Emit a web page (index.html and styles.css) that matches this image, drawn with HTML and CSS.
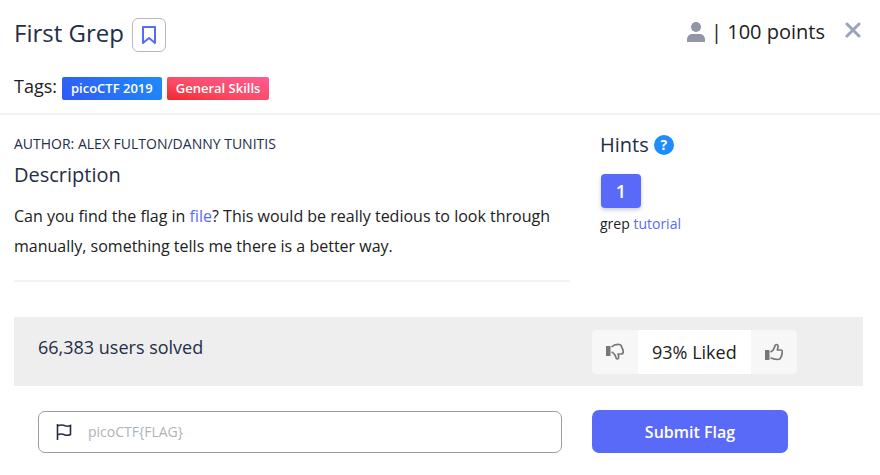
FILE: index.html
```html
<!DOCTYPE html>
<html lang="en">
<head>
    <meta charset="UTF-8">
    <meta name="viewport" content="width=device-width, initial-scale=1.0">
    <title>First Grep</title>
    <link rel="stylesheet" href="styles.css">
</head>
<body>
<header>
    <div class="title-row">
        <h1>First Grep</h1>
        <button type="button" class="bookmark" aria-label="Bookmark">
            <svg width="14" height="18" viewBox="0 0 14 18" fill="none" stroke="#5a6af8" stroke-width="2" stroke-linejoin="round"><path d="M1 1h12v16l-6-5-6 5z"/></svg>
        </button>
        <div class="points">
            <svg width="18" height="20" viewBox="0 0 18 20" fill="#9296a6"><circle cx="9" cy="5" r="5"/><path d="M0 20v-2.500c0-3.500 2.500-5.500 5.500-5.500h7c3 0 5.500 2 5.500 5.500V20z"/></svg>
            <span>| 100 points</span>
        </div>
        <button type="button" class="close" aria-label="Close">
            <svg width="16" height="16" viewBox="0 0 16 16" fill="none" stroke="#9ba3bf" stroke-width="3" stroke-linecap="round"><path d="M2 2l12 12M14 2L2 14"/></svg>
        </button>
    </div>
    <div class="tags">
        <span>Tags:</span>
        <span class="tag tag-event">picoCTF 2019</span>
        <span class="tag tag-category">General Skills</span>
    </div>
</header>
<main>
    <div class="details">
        <section class="description">
            <p class="author">AUTHOR: ALEX FULTON/DANNY TUNITIS</p>
            <h2>Description</h2>
            <p class="text">Can you find the flag in <a href="#">file</a>? This would be really tedious to look through manually, something tells me there is a better way.</p>
        </section>
        <section class="hints">
            <h2>Hints <span class="help">?</span></h2>
            <button type="button" class="hint-number">1</button>
            <p>grep <a href="#">tutorial</a></p>
        </section>
    </div>
    <div class="stats">
        <p class="solved">66,383 users solved</p>
        <div class="rating">
            <button type="button" aria-label="Dislike">
                <svg width="18" height="18" viewBox="0 0 18 18"><path fill="#777" d="M0 3h4.500v10H0z"/><path fill="none" stroke="#777" stroke-width="1.700" stroke-linejoin="round" d="M5.500 3.800C8 1.800 10 1.200 13 1.500c1.700.2 2.600 1 2.700 2.700 1 1.500 1.500 3.300 1.500 4.800 0 1.400-.8 2-2.200 2h-3c.8 2 1.200 5-.8 5-1.500 0-1.200-2.500-2.200-4-1-1.200-2-2.500-3.500-3"/></svg>
            </button>
            <span>93% Liked</span>
            <button type="button" aria-label="Like">
                <svg width="18" height="18" viewBox="0 0 18 18"><path fill="#777" d="M0 7h4.500v10H0z"/><path fill="none" stroke="#777" stroke-width="1.700" stroke-linejoin="round" d="M5.500 9C7.500 8 9 6 9.300 4.800 9.800 3 10 1.500 11.500 1.500c2 0 1.800 2.500.8 5.500h3.200c1.400 0 2 .8 1.800 2.200-.2 2-.6 3.600-1.500 5.300-.5 1.400-1.400 2-2.800 2-3.500 0-5-.7-7.500-1.700"/></svg>
            </button>
        </div>
    </div>
    <form class="submit">
        <label class="flag-box">
            <svg width="16" height="16" viewBox="0 0 16 16" fill="none" stroke="#252d48" stroke-width="2"><path d="M1.500 0v16M1.500 2C5 .5 7 .8 9 1.800c2 .6 4 .4 5.500-.3v9c-2 1-4 1-6 .2-2.500-1-5-.7-7 .3" stroke-width="1.600"/></svg>
            <input type="text" placeholder="picoCTF{FLAG}" aria-label="Flag">
        </label>
        <button type="submit">Submit Flag</button>
    </form>
</main>
</body>
</html>
```

FILE: styles.css
```css
* {
    box-sizing: border-box;
}
body {
    font-family: "Open Sans", sans-serif;
    font-size: 16px;
    color: #212121;
    background-color: #fff;
    margin: 0;
}
h1, h2, p {
    margin: 0;
    font-weight: normal;
}
h1, h2, .author, .solved {
    color: #252d48;
}
a {
    color: #5a6af8;
    text-decoration: none;
}
button {
    font-family: inherit;
    border: none;
    padding: 0;
    cursor: pointer;
}
svg {
    display: block;
}
header {
    padding: 16px 17px 13px 14px;
    border-bottom: 2px solid #f3f3f3;
}
.title-row {
    display: flex;
    align-items: flex-start;
}
h1 {
    font-size: 24px;
    line-height: 34px;
}
.bookmark {
    display: flex;
    align-items: center;
    justify-content: center;
    width: 34px;
    height: 34px;
    margin: 2px 0 0 8px;
    background: #fff;
    border: 1px solid #b4b9c4;
    border-radius: 6px;
}
.points {
    display: flex;
    align-items: center;
    gap: 6px;
    margin-left: auto;
    font-size: 20px;
    line-height: 32px;
}
.close {
    background: none;
    margin: 6px 2px 0 20px;
}
.tags {
    display: flex;
    align-items: center;
    gap: 5px;
    margin-top: 20px;
    font-size: 18px;
    line-height: 28px;
}
.tag {
    margin-top: 4px;
    padding: 0 9px;
    border-radius: 2px;
    color: #fff;
    font-size: 13px;
    font-weight: 600;
    line-height: 23px;
}
.tag-event {
    background: linear-gradient(45deg, #3158f5, #1e8cfa);
}
.tag-category {
    background: linear-gradient(to top right, #f02828, #f94a62 40%, #ff5c93);
}
main {
    padding: 15px 17px 20px 14px;
}
.details {
    display: grid;
    grid-template-columns: 1fr 263px;
    gap: 30px;
}
.description {
    padding-bottom: 19px;
    border-bottom: 2px solid #f3f3f3;
}
.author {
    margin-bottom: 2px;
    font-size: 14px;
    line-height: 28px;
}
h2 {
    font-size: 20px;
    line-height: 30px;
}
.text {
    margin-top: 11px;
    line-height: 30px;
}
.hints h2 {
    display: flex;
    align-items: center;
    gap: 5px;
}
.help {
    width: 20px;
    height: 20px;
    border-radius: 50%;
    background: #1e8cfa;
    color: #fff;
    font-size: 14px;
    font-weight: 700;
    line-height: 20px;
    text-align: center;
}
.hint-number {
    width: 40px;
    height: 34px;
    margin: 14px 0 6px 1px;
    border-radius: 4px;
    background: #5a6af8;
    box-shadow: 0 2px 4px rgba(0, 0, 0, 0.2);
    color: #fff;
    font-size: 18px;
    font-weight: 600;
}
.hints p {
    font-size: 14px;
    line-height: 20px;
}
.stats, .submit {
    display: grid;
    grid-template-columns: 1fr 247px;
    gap: 30px;
    padding: 0 24px;
}
.stats {
    margin-top: 35px;
    padding-top: 13px;
    padding-bottom: 12px;
    background: #eee;
}
.solved {
    font-size: 18px;
    line-height: 34px;
}
.rating {
    display: flex;
    justify-self: start;
    height: 44px;
    border-radius: 5px;
    overflow: hidden;
    background: #fff;
    font-size: 18px;
    line-height: 44px;
}
.rating span {
    padding: 0 14px;
}
.rating button {
    display: flex;
    align-items: center;
    justify-content: center;
    width: 46px;
    background: #f7f7f7;
}
.submit {
    align-items: center;
    margin-top: 24px;
}
.flag-box {
    display: flex;
    align-items: center;
    gap: 16px;
    height: 42px;
    padding: 0 17px;
    border: 1px solid #9a9da9;
    border-radius: 7px;
}
.flag-box input {
    flex: 1;
    min-width: 0;
    padding: 0;
    border: none;
    outline: none;
    background: none;
    font-family: inherit;
    font-size: 14px;
}
.flag-box input::placeholder {
    color: #b0b2ba;
}
.submit button {
    width: 196px;
    height: 43px;
    border-radius: 7px;
    background: #5a6af8;
    color: #fff;
    font-size: 16px;
    font-weight: 600;
}
```
